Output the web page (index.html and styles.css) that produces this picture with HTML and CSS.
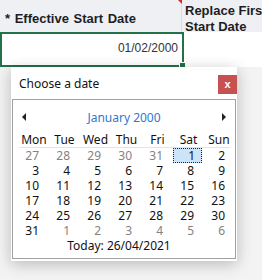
FILE: index.html
```html
<!DOCTYPE html>
<html lang="en">
<head>
    <meta charset="UTF-8">
    <meta name="viewport" content="width=device-width, initial-scale=1.0">
    <title>Choose a date</title>
    <link rel="stylesheet" href="styles.css">
</head>
<body>

<div class="sheet">
    <div class="head-row">
        <div class="head-cell col-a">* Effective Start Date</div>
        <div class="head-cell col-b">Replace First Start Date</div>
    </div>
    <div class="data-row">
        <div class="data-cell col-a active">01/02/2000</div>
        <div class="data-cell col-b"></div>
    </div>
</div>

<div class="datepicker">
    <div class="dp-title">
        <span class="dp-caption">Choose a date</span>
        <button class="dp-close">x</button>
    </div>
    <div class="dp-body">
        <div class="dp-nav">
            <span class="arrow arrow-left"></span>
            <span class="dp-month">January 2000</span>
            <span class="arrow arrow-right"></span>
        </div>
        <div class="dp-weekdays" id="weekdays"></div>
        <div class="dp-days" id="days"></div>
        <div class="dp-today">Today: 26/04/2021</div>
    </div>
</div>

<script>
    // Weekday labels
    const weekdays = ["Mon", "Tue", "Wed", "Thu", "Fri", "Sat", "Sun"];

    // January 2000 starts on a Saturday, so pad with the end of December
    const days = [];
    for (let d = 27; d <= 31; d++) days.push({ n: d, other: true });
    for (let d = 1; d <= 31; d++) days.push({ n: d, other: false });
    for (let d = 1; days.length < 42; d++) days.push({ n: d, other: true });

    const weekdayRow = document.getElementById("weekdays");
    weekdays.forEach(name => {
        const span = document.createElement("span");
        span.textContent = name;
        weekdayRow.appendChild(span);
    });

    const dayGrid = document.getElementById("days");
    days.forEach(day => {
        const cell = document.createElement("span");
        cell.classList.add("day");
        if (day.other) cell.classList.add("other");
        if (!day.other && day.n === 1) cell.classList.add("selected");
        cell.textContent = day.n;
        dayGrid.appendChild(cell);
    });
</script>

</body>
</html>
```

FILE: styles.css
```css
/* Basic styling */
body {
    margin: 0;
    padding: 0;
    background-color: #f3f3f3;
    overflow: hidden;
    font-family: "Noto Sans", sans-serif;
}

/* Spreadsheet header and row */
.sheet {
    width: 300px;
}

.head-row,
.data-row {
    display: grid;
    grid-template-columns: 182px 118px;
}

.head-row {
    height: 32px;
    background-color: #eef0f4;
}

.head-cell {
    position: relative;
    font-family: "Liberation Sans", Arial, sans-serif;
    font-weight: bold;
    font-size: 13px;
    color: #1e1e1e;
}

.head-cell.col-a {
    display: flex;
    align-items: center;
    padding: 1px 0 0 5px;
    border-right: 1px solid #d9dce2;
    word-spacing: 1px;
}

/* red comment marker */
.head-cell.col-a::after {
    content: "";
    position: absolute;
    top: 0;
    right: -1px;
    border-top: 4px solid #e0231c;
    border-left: 4px solid transparent;
}

.head-cell.col-b {
    padding: 3px 0 0 3px;
    line-height: 16px;
    width: 96px;
}

.data-row {
    height: 35px;
    background-color: white;
}

.data-cell.col-a {
    position: relative;
    box-sizing: border-box;
    width: 184px;
    height: 35px;
    padding: 0 4px 4px 0;
    display: flex;
    align-items: center;
    justify-content: flex-end;
    border: 2px solid #21714a;
    font-family: "Liberation Sans", Arial, sans-serif;
    font-size: 12px;
    color: #333;
}

/* fill handle */
.data-cell.active::after {
    content: "";
    position: absolute;
    right: -4px;
    bottom: -4px;
    width: 5px;
    height: 5px;
    background-color: #21714a;
    border: 1px solid white;
}

/* Date picker popup */
.datepicker {
    position: absolute;
    left: 11px;
    top: 67px;
    width: 226px;
    box-sizing: border-box;
    padding: 0 1px 2px 1px;
    background-color: white;
    box-shadow: 0 3px 14px rgba(0, 0, 0, 0.24);
}

.dp-title {
    height: 32px;
    display: flex;
    justify-content: space-between;
    align-items: flex-start;
    padding-top: 8px;
    box-sizing: border-box;
}

.dp-caption {
    padding-left: 7px;
    font-size: 12px;
    line-height: 17px;
    color: #111;
}

.dp-close {
    width: 19px;
    height: 19px;
    margin-right: -1px;
    padding: 0;
    border: none;
    background-color: #c75050;
    color: white;
    font-family: "Liberation Sans", Arial, sans-serif;
    font-weight: bold;
    font-size: 11px;
    line-height: 17px;
}

.dp-body {
    border: 1px solid #a0a0a0;
    padding: 8px 2px 4px 2px;
}

.dp-nav {
    height: 18px;
    display: flex;
    align-items: center;
    justify-content: space-between;
    padding: 0 7px;
}

.dp-month {
    font-size: 12px;
    color: #2f78d0;
}

.arrow {
    width: 0;
    height: 0;
    border-top: 4px solid transparent;
    border-bottom: 4px solid transparent;
}

.arrow-left {
    border-right: 4px solid #222;
}

.arrow-right {
    border-left: 4px solid #222;
}

.dp-weekdays,
.dp-days {
    display: grid;
    grid-template-columns: repeat(7, 31px);
    margin-left: 1px;
    font-size: 12px;
    color: #111;
}

.dp-weekdays {
    margin-top: 6px;
    height: 15px;
    line-height: 15px;
    text-align: center;
    border-bottom: 1px solid #e3e3e3;
    width: 211px;
    margin-left: 4px;
    grid-template-columns: 30px 31px 31px 31px 31px 31px 30px;
}

.day {
    height: 15px;
    line-height: 15px;
    text-align: right;
    padding-right: 8px;
    box-sizing: border-box;
}

.day.other {
    color: #838383;
}

.day.selected {
    margin-left: 2px;
    padding-right: 7px;
    background-color: #cce4f7;
    outline: 1px dotted #222;
    outline-offset: -1px;
}

.dp-today {
    height: 16px;
    line-height: 16px;
    padding-right: 10px;
    text-align: center;
    font-size: 12px;
    color: #111;
}
```
